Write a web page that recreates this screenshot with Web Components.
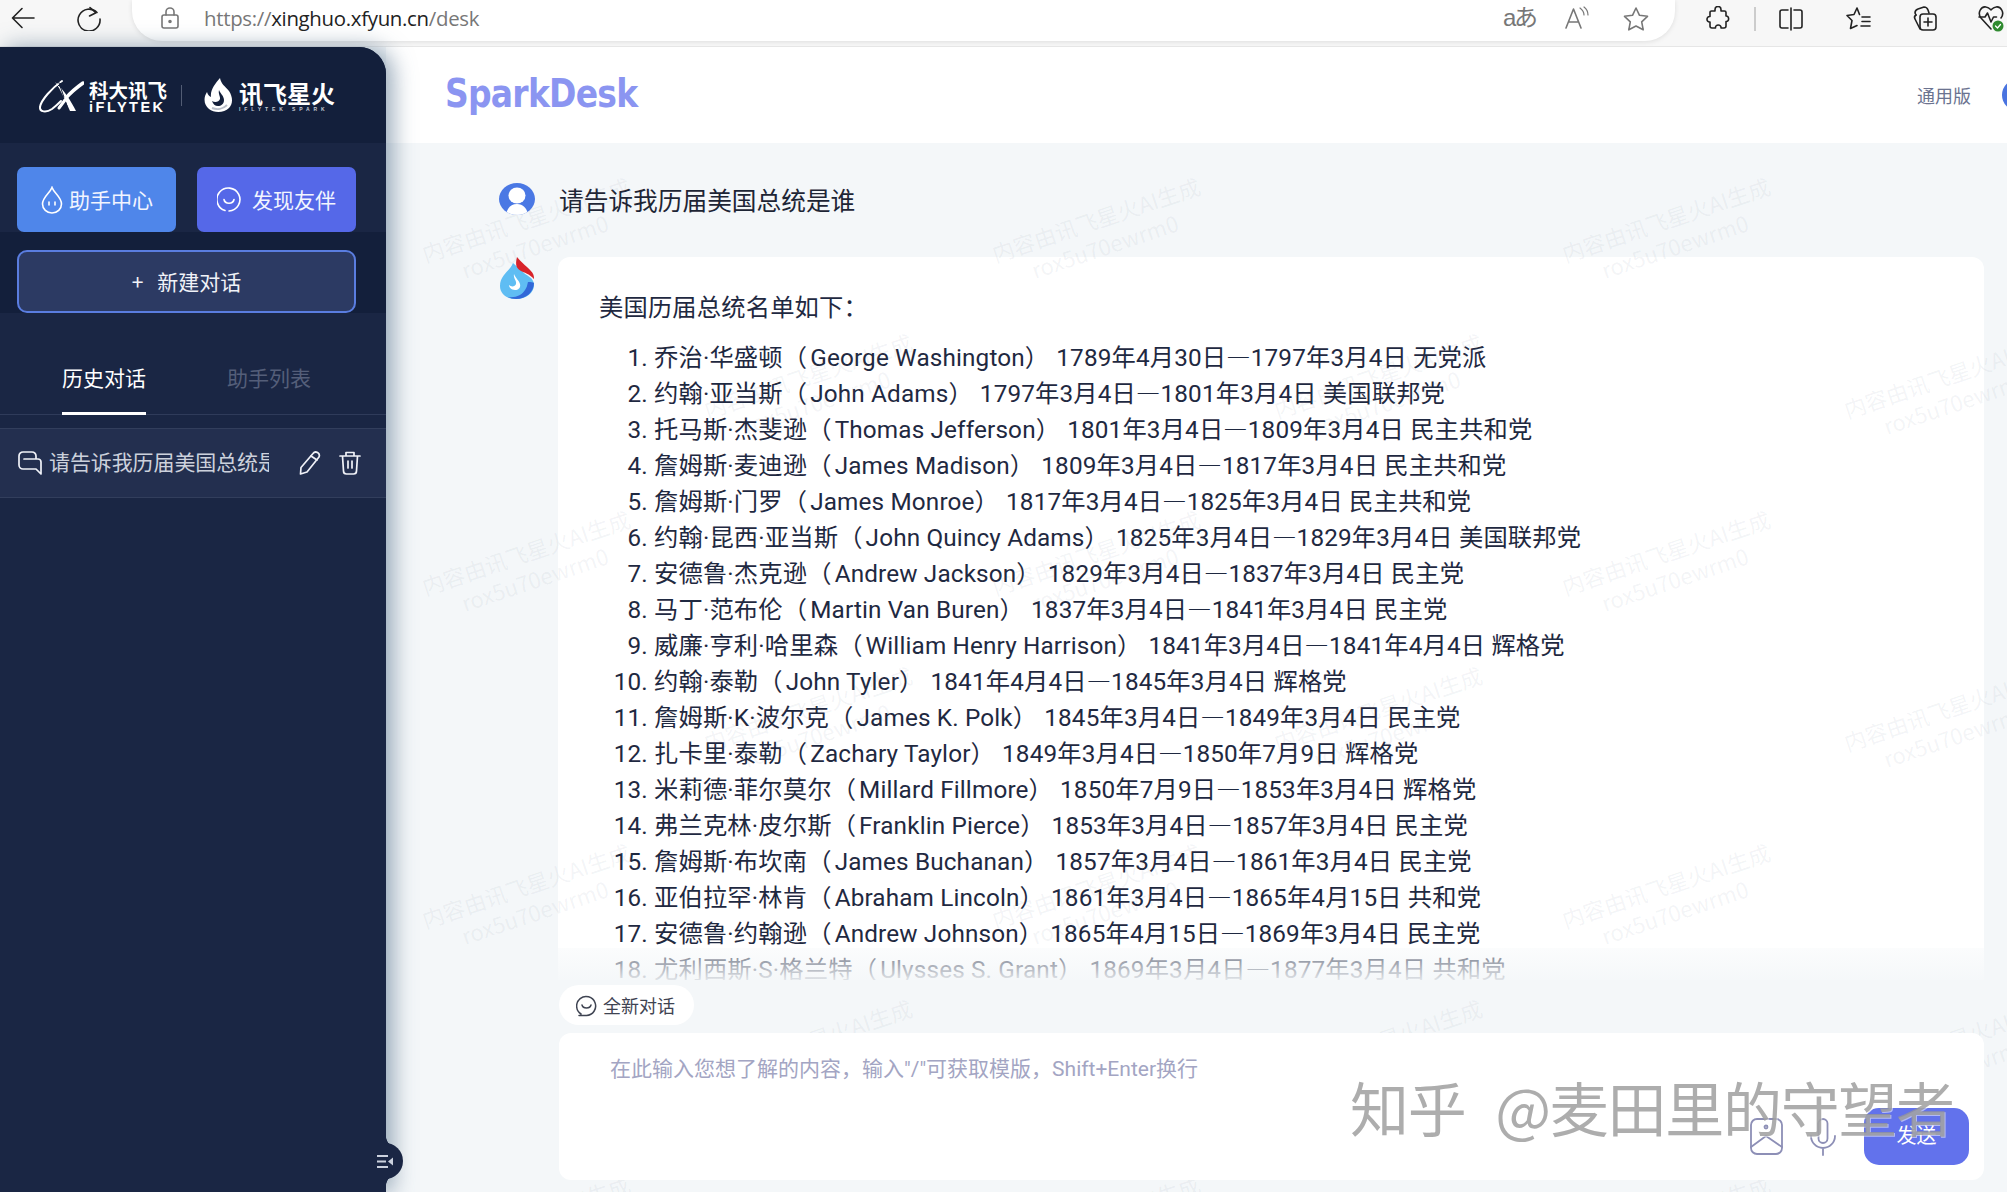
<!DOCTYPE html>
<html lang="zh-CN">
<head>
<meta charset="utf-8">
<title>SparkDesk</title>
<style>
html,body { margin:0; height:100%; overflow:hidden; background:#f4f7f9; }
body { display:flex; flex-direction:column; font-family:"Noto Sans","Noto Sans CJK SC",sans-serif; }
</style>
</head>
<body>
<browser-bar url-host="xinghuo.xfyun.cn"></browser-bar>
<spark-app>
  <spark-sidebar slot="side"></spark-sidebar>
  <spark-header slot="head"></spark-header>
  <water-marks slot="chat"></water-marks>
  <user-message slot="chat">请告诉我历届美国总统是谁</user-message>
  <bot-message slot="chat">
    <p>美国历届总统名单如下：</p>
    <ol>
      <li>乔治·华盛顿（George Washington）1789年4月30日—1797年3月4日 无党派</li>
      <li>约翰·亚当斯（John Adams）1797年3月4日—1801年3月4日 美国联邦党</li>
      <li>托马斯·杰斐逊（Thomas Jefferson）1801年3月4日—1809年3月4日 民主共和党</li>
      <li>詹姆斯·麦迪逊（James Madison）1809年3月4日—1817年3月4日 民主共和党</li>
      <li>詹姆斯·门罗（James Monroe）1817年3月4日—1825年3月4日 民主共和党</li>
      <li>约翰·昆西·亚当斯（John Quincy Adams）1825年3月4日—1829年3月4日 美国联邦党</li>
      <li>安德鲁·杰克逊（Andrew Jackson）1829年3月4日—1837年3月4日 民主党</li>
      <li>马丁·范布伦（Martin Van Buren）1837年3月4日—1841年3月4日 民主党</li>
      <li>威廉·亨利·哈里森（William Henry Harrison）1841年3月4日—1841年4月4日 辉格党</li>
      <li>约翰·泰勒（John Tyler）1841年4月4日—1845年3月4日 辉格党</li>
      <li>詹姆斯·K·波尔克（James K. Polk）1845年3月4日—1849年3月4日 民主党</li>
      <li>扎卡里·泰勒（Zachary Taylor）1849年3月4日—1850年7月9日 辉格党</li>
      <li>米莉德·菲尔莫尔（Millard Fillmore）1850年7月9日—1853年3月4日 辉格党</li>
      <li>弗兰克林·皮尔斯（Franklin Pierce）1853年3月4日—1857年3月4日 民主党</li>
      <li>詹姆斯·布坎南（James Buchanan）1857年3月4日—1861年3月4日 民主党</li>
      <li>亚伯拉罕·林肯（Abraham Lincoln）1861年3月4日—1865年4月15日 共和党</li>
      <li>安德鲁·约翰逊（Andrew Johnson）1865年4月15日—1869年3月4日 民主党</li>
      <li>尤利西斯·S·格兰特（Ulysses S. Grant）1869年3月4日—1877年3月4日 共和党</li>
    </ol>
  </bot-message>
  <new-chat slot="chat"></new-chat>
  <chat-input slot="chat"></chat-input>
</spark-app>
<zhihu-mark>知乎 @麦田里的守望者</zhihu-mark>

<script>
/* SparkDesk screenshot components */

function tpl(html) {
  const t = document.createElement('template');
  t.innerHTML = html;
  return t;
}

class Base extends HTMLElement {
  constructor() {
    super();
    const shadow = this.attachShadow({mode: 'open'});
    shadow.appendChild(this.constructor.TEMPLATE.content.cloneNode(true));
  }
}

/* ---- browser chrome ---- */
class BrowserBar extends Base {
  static TEMPLATE = tpl(`
<style>
:host { display:block; flex:none; height:47px; background:#f7f7f7; border-bottom:1px solid #e6e6e6; box-sizing:border-box; }
main { display:flex; align-items:flex-start; height:46px; }
svg { display:block; flex:none; fill:none; stroke:#222; stroke-width:1.6; stroke-linecap:round; stroke-linejoin:round; }
.nav { display:flex; gap:42px; padding:6px 0 0 11px; width:132px; box-sizing:border-box; }
.pill { display:flex; align-items:center; width:1543px; height:41px; margin-top:0; background:#fff; border-radius:0 0 30px 30px; box-shadow:0 1px 5px rgba(0,0,0,.10); box-sizing:border-box; padding:0 26px 5px 29px; }
.pill svg { stroke:#777; }
.url { margin-left:25px; flex:1; font:20.400px/36px "Open Sans","Noto Sans",sans-serif; letter-spacing:-.3px; color:#777; }
.url b { font-weight:400; color:#222; }
.acts { display:flex; align-items:center; }
.tr { font:24px/30px "Liberation Sans",sans-serif; color:#777; width:26px; margin-right:36px; white-space:nowrap; letter-spacing:-2px; }
.tools { display:flex; align-items:center; padding:5px 0 0 31px; gap:0; }
</style>
<main>
  <div class="nav">
    <svg width="24" height="24" viewBox="0 0 24 24"><path d="M23 12H1.500M11 2.500 1.500 12l9.500 9.500"/></svg>
    <svg width="24" height="25" viewBox="0 0 24 25"><path d="M20 6.500A11 11 0 1 0 23 13"/><path d="M13 1.500 19 6.800 12.500 10"/></svg>
  </div>
  <div class="pill">
    <svg width="18" height="22" viewBox="0 0 18 22"><rect x="1" y="8" width="16" height="13" rx="2"/><path d="M5 8V5a4 4 0 0 1 8 0v3"/><circle cx="9" cy="14.500" r="1" fill="#777"/></svg>
    <div class="url">https://<b>xinghuo.xfyun.cn</b>/desk</div>
    <div class="acts">
      <div class="tr">aあ</div>
      <svg width="24" height="24" viewBox="0 0 24 24" style="margin-right:34px"><path d="M1 22 8.500 3 16 22M3.500 16h10"/><path d="M15 2q4 3 4 7M19 1q4 3 4 8" stroke-width="1.200"/></svg>
      <svg width="26" height="25" viewBox="0 0 26 25"><path d="M13 2l3.500 7.300 8 1-5.800 5.500 1.500 8L13 20l-7.200 3.800 1.500-8L1.500 10.300l8-1z"/></svg>
    </div>
  </div>
  <div class="tools">
    <svg width="24" height="25" viewBox="0 0 24 25"><path d="M9 3.500a3 3 0 0 1 6 0V5h3.500A1.500 1.500 0 0 1 20 6.500V10c3.500-.5 3.500 6 0 5.500V20a2 2 0 0 1-2 2h-3c.5-4-6-4-5.500 0H6a2 2 0 0 1-2-2v-4c-4 .5-4-6 0-5.500V6.500A1.500 1.500 0 0 1 5.500 5H9z"/></svg>
    <i style="display:block;width:2px;height:24px;background:#ccc;margin:0 23px 0 24px"></i>
    <svg width="24" height="24" viewBox="0 0 24 24" style="margin-right:43px"><path d="M9 3H3a2 2 0 0 0-2 2v14a2 2 0 0 0 2 2h6M15 3h6a2 2 0 0 1 2 2v14a2 2 0 0 1-2 2h-6M12 1v22"/></svg>
    <svg width="25" height="25" viewBox="0 0 25 25" style="margin-right:41px"><path d="M11 2l2.500 6.500M11 2 8 8.500l-7 1 5 5-1.500 8L11 19.500M16 11h8M16 15.500h8M15 20h9"/></svg>
    <svg width="25" height="25" viewBox="0 0 25 25" style="margin-right:41px"><path d="M8 23 3 13a3 3 0 0 1 1-4"/><path d="M4 9 3 7q0-3 3-4l6-2q3 0 4 3l1 3"/><rect x="8" y="8" width="16" height="16" rx="3"/><path d="M16 12v8M12 16h8"/></svg>
    <svg width="26" height="27" viewBox="0 0 26 27"><path d="M13 24 3 13C-1 8 3 1 8 2c3 .5 4 2 5 3 1-1 2-2.500 5-3 5-1 9 6 5 11"/><path d="M1 12h6l2.500-4 3.500 9 2.500-5h3"/><circle cx="20" cy="21" r="5.500" fill="#2f8a2f" stroke="none"/><path d="M17.500 21l2 2 3-3.500" stroke="#fff" stroke-width="1.300"/></svg>
  </div>
</main>`);
}
customElements.define('browser-bar', BrowserBar);

/* ---- page frame ---- */
class SparkApp extends Base {
  static TEMPLATE = tpl(`
<style>
:host { display:flex; flex:1; min-height:0; }
.side { flex:none; width:386px; position:relative; z-index:3; display:flex; }
.main { flex:1; min-width:0; display:flex; flex-direction:column; }
.head { flex:none; height:96px; position:relative; z-index:2; }
.chat { flex:1; min-height:0; position:relative; display:flex; flex-direction:column; box-sizing:border-box; padding:40px 23px 12px 113px; background:#f4f7f9; }
</style>
<div class="side"><slot name="side"></slot></div>
<div class="main">
  <div class="head"><slot name="head"></slot></div>
  <div class="chat"><slot name="chat"></slot></div>
</div>`);
}
customElements.define('spark-app', SparkApp);

/* ---- sidebar ---- */
class SparkSidebar extends Base {
  static TEMPLATE = tpl(`
<style>
:host { display:flex; flex-direction:column; width:386px; position:relative; background:#1a2644; border-top-right-radius:27px; box-shadow:7px 0 22px rgba(70,100,130,.55); color:#fff; font:21px/1.2 "Noto Sans CJK SC",sans-serif; }
.logo { height:96px; background:#131f3b; border-top-right-radius:27px; position:relative; flex:none; display:flex; align-items:center; padding-left:38px; box-sizing:border-box; }
.logo svg { display:block; flex:none; }
.cn1 { font-size:19.500px; font-weight:700; line-height:20px; white-space:nowrap; }
.en1 { font:700 14.500px/12px "Liberation Sans",sans-serif; letter-spacing:2.500px; white-space:nowrap; }
.cn2 { font-size:24px; font-weight:700; line-height:26px; white-space:nowrap; }
.en2 { font:700 5px/7px "Liberation Sans",sans-serif; letter-spacing:3.900px; white-space:nowrap; color:#c7ccd6; }
.sep { width:1px; height:21px; background:#525c74; margin:0 23px 0 14px; }
.btns { height:89px; box-sizing:border-box; padding-top:24px; flex:none; display:flex; gap:21px; padding-left:17px; }
.btn { width:159px; height:65px; border-radius:7px; display:flex; align-items:center; box-sizing:border-box; color:#f2f5ff; }
.b1 { background:#4f86ea; padding-left:24px; gap:6px; }
.b2 { background:#5568e8; padding-left:20px; gap:11px; }
.dark { height:81px; background:#131f3b; padding:18px 30px 0 17px; box-sizing:border-box; flex:none; }
.new { height:63px; width:339px; box-sizing:border-box; background:#2c3a63; border:2px solid #5a7de0; border-radius:10px; display:flex; align-items:center; justify-content:center; gap:14px; color:#f0f2f8; }
.tabs { display:flex; height:102px; flex:none; box-sizing:border-box; border-bottom:1px solid #2f3b5a; padding-left:62px; gap:81px; }
.tab { height:102px; box-sizing:border-box; line-height:128px; color:#545e79; }
.tab.on { color:#fff; border-bottom:3px solid #fff; }
.item { margin-top:13px; height:70px; box-sizing:border-box; background:#232f4f; border-top:1px solid #323e5c; border-bottom:1px solid #323e5c; display:flex; align-items:center; padding-left:18px; color:#ccd1dc; flex:none; }
.item svg { display:block; flex:none; fill:none; stroke:#f0f2f8; stroke-width:1.700; stroke-linecap:round; stroke-linejoin:round; }
.tt { width:220px; margin:-2px 0 0 7px; overflow:hidden; white-space:nowrap; font-size:21px; letter-spacing:-.1px; }
.handle { position:absolute; left:362px; bottom:13px; width:41px; height:36px; background:#1a2644; border-radius:0 18px 18px 0; display:flex; align-items:center; padding-left:15px; box-sizing:border-box; }
.handle::before, .handle::after { content:""; position:absolute; left:24px; width:9px; height:9px; }
.handle::before { top:-6px; background:radial-gradient(circle at 100% 0, transparent 8.500px, #1a2644 9px); }
.handle::after { bottom:-6px; background:radial-gradient(circle at 100% 100%, transparent 8.500px, #1a2644 9px); }
.handle svg { display:block; }
</style>
<div class="logo">
  <svg width="46" height="38" viewBox="0 0 46 38" fill="none" stroke="#fff" stroke-linecap="round">
    <path d="M24 5C14 12 3 24 2 31c-.5 5 6 6 12 2 4-3 7-6 9-8" stroke-width="2"/>
    <path d="M17 6c6 8 10 18 15 29h6C33 25 26 14 17 6z" fill="#fff" stroke="none"/>
    <path d="M23 7l-6 6M20 4l9 26" stroke="#131f3b" stroke-width="1"/>
    <path d="M45 7C38 12 33 16 28 22" stroke-width="3.500"/>
    <path d="M27 24 21 32" stroke-width="3"/>
  </svg>
  <div style="margin-left:5px;display:flex;flex-direction:column;padding-top:2px">
    <div class="cn1">科大讯飞</div>
    <div class="en1" style="margin-top:1px">iFLYTEK</div>
  </div>
  <div class="sep"></div>
  <svg width="29" height="34" viewBox="0 0 29 34" style="margin-left:-1px">
    <path d="M16 0c1 6 5 8 9 13 4 6 4 13 0 17-5 5-15 5-20 1C0 27-1 20 3 14c1 3 2 4 4 5C6 12 11 6 16 0z" fill="#fff"/>
    <path d="M15 12c1 3 5 6 5 10 0 4-3 6-6 6s-5-2-6-5c3 2 7 1 8-2 .5-3-2-5-1-9z" fill="#131f3b"/>
    <path d="M8 30c5 2 11 1 15-3" stroke="#b9bec9" stroke-width="2" fill="none"/>
  </svg>
  <div style="margin-left:6px;display:flex;flex-direction:column;padding-top:2px">
    <div class="cn2">讯飞星火</div>
    <div class="en2">IFLYTEK SPARK</div>
  </div>
</div>
<div class="btns">
  <div class="btn b1">
    <svg width="22" height="28" viewBox="0 0 22 28" fill="none" stroke="#fff" stroke-width="1.600" stroke-linecap="round"><path d="M11 1.500C9 7 1.500 11 1.500 18a9.500 9 0 0 0 19 0C20.500 11 13 7 11 1.500z"/><path d="M8 16v3M14 16v3"/></svg>
    <span>助手中心</span>
  </div>
  <div class="btn b2">
    <svg width="24" height="25" viewBox="0 0 24 25" fill="none" stroke="#fff" stroke-width="1.600" stroke-linecap="round"><path d="M8 23.500A11.500 11.500 0 1 1 12 24"/><path d="M7 12.500c1 5 9 5 10 0"/></svg>
    <span>发现友伴</span>
  </div>
</div>
<div class="dark">
  <div class="new"><span>+</span><span>新建对话</span></div>
</div>
<div class="tabs">
  <div class="tab on">历史对话</div>
  <div class="tab">助手列表</div>
</div>
<div class="item">
  <svg width="24" height="25" viewBox="0 0 24 25"><path d="M18 8V5a4 4 0 0 0-4-4H5a4 4 0 0 0-4 4v9a4 4 0 0 0 4 4h13l5 5V11a3 3 0 0 0-3-3H6"/></svg>
  <div class="tt">请告诉我历届美国总统是谁</div>
  <svg width="23" height="24" viewBox="0 0 23 24" style="margin-left:29px"><path d="M15 2.500a3.500 3.500 0 0 1 6 3.500L9 21l-6.500 2 .5-6.500z"/><path d="M13 5l6 4"/></svg>
  <svg width="22" height="24" viewBox="0 0 22 24" style="margin-left:18px"><path d="M1 5h20M7 5V1.500h8V5M3.500 5l1 15a3 3 0 0 0 3 3h7a3 3 0 0 0 3-3l1-15M9 10v7M13 10v7"/></svg>
</div>
<div class="handle">
  <svg width="16" height="13" viewBox="0 0 16 13" fill="#cbd1de"><rect width="11" height="2"/><rect y="5.500" width="9" height="2"/><rect y="11" width="11" height="2"/><path d="M16 2.500v8L11 6.500z"/></svg>
</div>`);
}
customElements.define('spark-sidebar', SparkSidebar);

/* ---- top header ---- */
class SparkHeader extends Base {
  static TEMPLATE = tpl(`
<style>
:host { display:flex; align-items:center; height:96px; background:#fff; box-sizing:border-box; padding-left:59px; overflow:hidden; }
.brand { font:700 39px/1 "DejaVu Sans",sans-serif; font-stretch:condensed; color:#8b95f1; letter-spacing:-.8px; transform:scaleX(.94); transform-origin:0 50%; width:193px; white-space:nowrap; margin-top:-4px; }
.ver { margin-left:auto; font:18px/1 "Noto Sans CJK SC",sans-serif; color:#6b7390; }
.dot { flex:none; width:32px; height:32px; margin:0 -27px 0 31px; border-radius:50%; background:#4a74e0; }
</style>
<div class="brand">SparkDesk</div>
<div class="ver">通用版</div>
<div class="dot"></div>`);
}
customElements.define('spark-header', SparkHeader);

/* ---- faint repeated watermark, free placed ---- */
class WaterMarks extends Base {
  static TEMPLATE = tpl(`
<style>
:host { position:absolute; inset:0; overflow:hidden; pointer-events:none; z-index:1; }
div { position:absolute; width:260px; margin:-30px 0 0 -130px; text-align:center; transform:rotate(-18.500deg); color:rgba(90,110,135,.075); font:22px/28px "Noto Sans CJK SC",sans-serif; white-space:nowrap; }
</style>`);
  connectedCallback() {
    for(let row=0; row<7; row++) {
      const y = 234 + row*166.4 - 143 - (row%2 ? 10 : 0);
      const first = row%2 ? 812 : 530;
      for(let x=first; x<2300; x+=570) {
        const m = document.createElement('div');
        m.style.left = (x-386)+'px';
        m.style.top = y+'px';
        m.innerHTML = '内容由讯飞星火AI生成<br>rox5u70ewrm0';
        this.shadowRoot.appendChild(m);
      }
    }
  }
}
customElements.define('water-marks', WaterMarks);

/* ---- messages ---- */
class UserMessage extends Base {
  static TEMPLATE = tpl(`
<style>
:host { display:flex; align-items:center; height:32px; flex:none; position:relative; font:24.700px/34px "Noto Sans CJK SC",sans-serif; color:#1e2535; }
svg { display:block; flex:none; margin-right:24px; }
</style>
<svg width="36" height="32" viewBox="0 0 36 32">
  <defs><clipPath id="c"><ellipse cx="18" cy="16" rx="18" ry="16"/></clipPath></defs>
  <ellipse cx="18" cy="16" rx="18" ry="16" fill="#4a78e4"/>
  <g clip-path="url(#c)" fill="#fff"><ellipse cx="18" cy="12.500" rx="8.500" ry="8"/><path d="M7 32c1-7 5-11 11-11s10 4 11 11z"/></g>
</svg>
<slot></slot>`);
}
customElements.define('user-message', UserMessage);

class BotMessage extends Base {
  static TEMPLATE = tpl(`
<style>
:host { display:flex; flex:1; min-height:0; margin-top:42px; position:relative; }
svg { display:block; flex:none; margin-right:23px; }
.card { flex:1; min-width:0; height:100%; position:relative; overflow:hidden; background:#fff; border-radius:12px 12px 0 0; box-sizing:border-box; padding:33px 41px 0; font:24.300px/36px "Roboto","Noto Sans CJK SC",sans-serif; letter-spacing:.15px; color:#1f2941; }
.fade { position:absolute; left:0; right:0; bottom:0; height:32px; background:linear-gradient(rgba(244,247,249,.35),rgba(244,247,249,.9)); }
::slotted(p) { margin:0 0 14px; }
::slotted(ol) { margin:0; padding:0 0 0 55px; }
</style>
<svg width="36" height="43" viewBox="0 0 36 43">
  <path d="M14 6C11 14 1 18 1 29c0 8 7 13 16 13 10 0 18-6 18-14 0-8-8-9-12-14C20 11 17 9 14 6z" fill="#5fbdf3"/>
  <path d="M18 0C16 8 17 12 24 15c6 2 9 5 11 7C36 14 26 10 18 0z" fill="#d8232a"/>
  <path d="M15 17c2 5 5 6 6 10 1 4-2 6-5 6-4 0-6-3-6-5 2 2 6 2 7-1 1-3-3-6-2-10z" fill="#fff"/>
  <path d="M35 26c0 9-8 16-18 16-3 0-6-1-8-2 8 1 14-2 17-7 2-3 2-4 3-8 3 0 5 0 6 1z" fill="#3168d8"/>
</svg>
<div class="card"><slot></slot><div class="fade"></div></div>`);
  connectedCallback() {
    // full width dash and wider gaps round the brackets, as in the original font
    this.querySelectorAll('li').forEach(li => {
      li.innerHTML = li.innerHTML
        .replace(/（/g, '<span style="margin-right:3px">（</span>')
        .replace(/）/g, '<span style="margin-right:7px">）</span>')
        .replace(/—/g, '<span style="font-family:\'Noto Sans CJK SC\',sans-serif;line-height:0">—</span>');
    });
  }
}
customElements.define('bot-message', BotMessage);

/* ---- input area ---- */
class NewChat extends Base {
  static TEMPLATE = tpl(`
<style>
:host { display:flex; align-self:flex-start; align-items:center; gap:6px; flex:none; position:relative; z-index:2; height:40px; width:135px; margin:5px 0 8px 60px; box-sizing:border-box; padding-left:17px; background:#fff; border-radius:20px; font:18px/1 "Noto Sans CJK SC",sans-serif; color:#3f4452; white-space:nowrap; }
svg { display:block; flex:none; }
</style>
<svg width="21" height="23" viewBox="0 0 21 23" fill="none" stroke="#3f4452" stroke-width="1.500" stroke-linecap="round"><path d="M5 20A9.500 9.500 0 1 1 10.500 21.500H3"/><path d="M6 11c1 4 8 4 9 0"/></svg>
<span>全新对话</span>`);
}
customElements.define('new-chat', NewChat);

class ChatInput extends Base {
  static TEMPLATE = tpl(`
<style>
:host { display:block; position:relative; z-index:2; flex:none; height:147px; margin-left:60px; background:#fff; border-radius:12px; box-sizing:border-box; padding:23px 51px; font:21px/26px "Roboto","Noto Sans CJK SC",sans-serif; color:#a3a5c3; white-space:nowrap; }
.bar { position:absolute; right:15px; bottom:15px; display:flex; align-items:center; }
svg { display:block; flex:none; fill:none; stroke:#8d8fb6; stroke-width:1.800; stroke-linecap:round; stroke-linejoin:round; }
.send { width:105px; height:57px; margin-left:28px; background:#6272ec; border-radius:15px; color:#fff; font-size:20px; line-height:57px; text-align:center; }
</style>
在此输入您想了解的内容，输入"/"可获取模版，Shift+Enter换行
<div class="bar">
  <svg width="33" height="37" viewBox="0 0 33 37"><rect x="1" y="1" width="31" height="35" rx="6"/><path d="M1 29 16 18l16 11"/><circle cx="16" cy="9" r="1.500"/></svg>
  <svg width="26" height="38" viewBox="0 0 26 38" style="margin-left:27px"><rect x="8.500" y="1" width="9" height="24" rx="4.500"/><path d="M1 18a12 12 0 0 0 24 0M13 30v7"/></svg>
  <div class="send">发送</div>
</div>`);
}
customElements.define('chat-input', ChatInput);

/* zhihu repost stamp lies over everything */
class ZhihuMark extends Base {
  static TEMPLATE = tpl(`
<style>
:host { position:absolute; left:1350px; top:1075px; z-index:9; font:400 59px/64px "Noto Sans CJK SC",sans-serif; color:rgba(150,150,150,.78); white-space:nowrap; text-shadow:1px 1px 0 rgba(255,255,255,.5); pointer-events:none; letter-spacing:-1.300px; word-spacing:18px; }
</style>
<slot></slot>`);
}
customElements.define('zhihu-mark', ZhihuMark);
</script>
</body>
</html>
